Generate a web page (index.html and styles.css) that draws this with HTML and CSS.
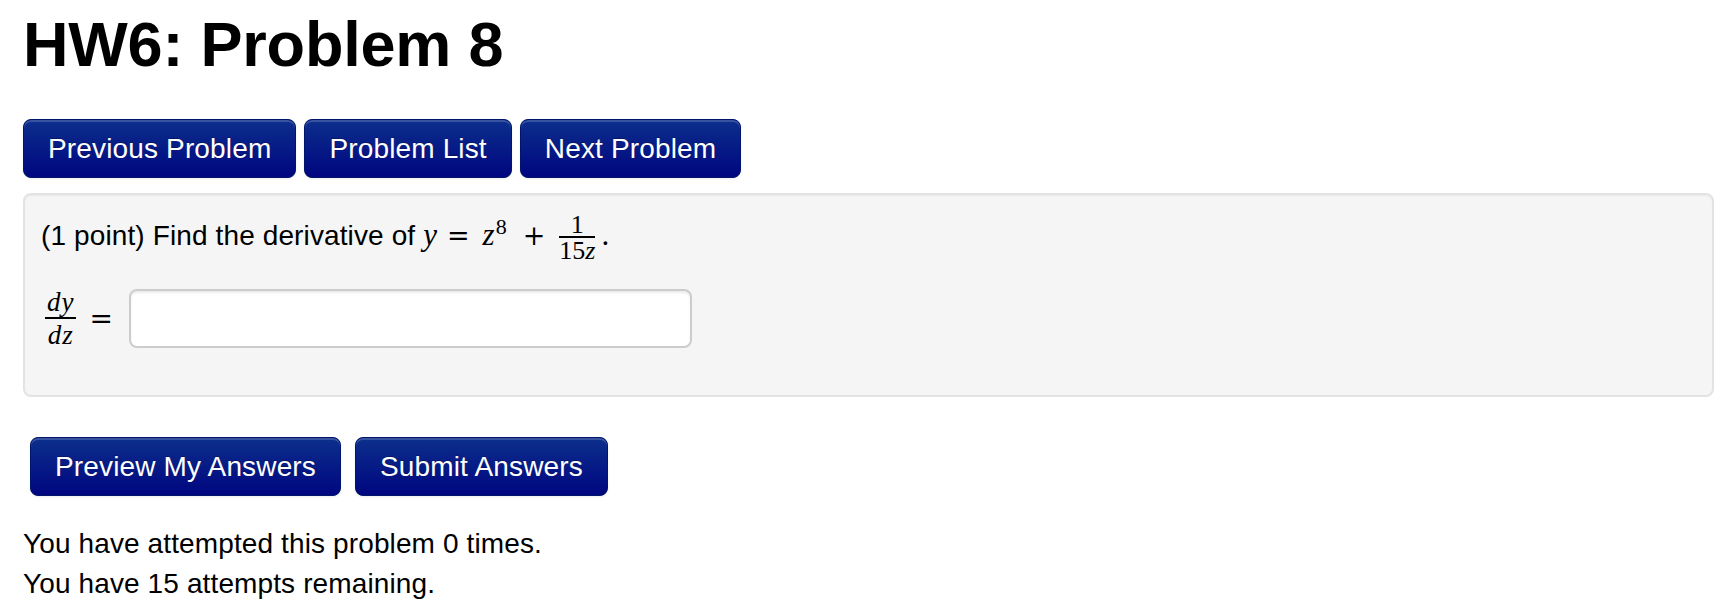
FILE: index.html
```html
<!DOCTYPE html>
<html lang="en">
<head>
<meta charset="utf-8">
<title>HW6: Problem 8</title>
<link rel="stylesheet" href="styles.css">
</head>
<body>
<div class="page">
  <h1 class="title">HW6: Problem 8</h1>

  <div class="nav-buttons">
    <a class="btn">Previous Problem</a>
    <a class="btn">Problem List</a>
    <a class="btn">Next Problem</a>
  </div>

  <div class="well">
    <p class="statement">(1 point) Find the derivative of <span class="math"><span class="mi">y</span><span class="mo eq-inline">=</span><span class="mi">z</span><span class="msup">8</span><span class="mo plus">+</span><span class="frac frac-inline"><span class="num"><span class="mn">1</span></span><span class="den"><span class="mn">15</span><span class="mi">z</span></span></span><span class="mo dot">.</span></span></p>

    <div class="answer-row">
      <span class="frac frac-dydz"><span class="num">dy</span><span class="den">dz</span></span>
      <span class="eq">=</span>
      <input class="answer" type="text">
    </div>
  </div>

  <div class="submit-row">
    <button class="btn" type="button">Preview My Answers</button>
    <button class="btn" type="button">Submit Answers</button>
  </div>

  <div class="attempts">
    <p>You have attempted this problem 0 times.</p>
    <p>You have 15 attempts remaining.</p>
  </div>
</div>
</body>
</html>
```

FILE: styles.css
```css
html, body {
  margin: 0;
  padding: 0;
  background: #ffffff;
}

body {
  font-family: "Liberation Sans", Arial, Helvetica, sans-serif;
  font-size: 28px;
  line-height: 40px;
  color: #000000;
  letter-spacing: 0.12px;
}

.page {
  padding: 0 16px 0 23px;
}

.title {
  margin: 4px 0 35px;
  font-size: 63px;
  line-height: 80px;
  font-weight: bold;
  letter-spacing: -0.2px;
}

.nav-buttons {
  display: flex;
  gap: 8px;
  margin-bottom: 15px;
}

.btn {
  display: inline-block;
  box-sizing: border-box;
  padding: 8.5px 24px;
  font-family: "Liberation Sans", Arial, Helvetica, sans-serif;
  font-size: 28px;
  line-height: 40px;
  letter-spacing: 0.15px;
  color: #ffffff;
  text-shadow: 0 -1px 0 rgba(0, 0, 0, 0.25);
  background-color: #000a80;
  background-image: linear-gradient(to bottom, #0c2f8c, #000680);
  border: 1px solid #00166a;
  border-radius: 8px;
  box-shadow: inset 0 2px 0 rgba(255, 255, 255, 0.18), 0 1px 2px rgba(0, 0, 0, 0.08);
  cursor: pointer;
  text-decoration: none;
  white-space: nowrap;
}

.well {
  box-sizing: border-box;
  padding: 19px 16px;
  margin-bottom: 40px;
  background: #f5f5f5;
  border: 2px solid #e3e3e3;
  border-radius: 8px;
  box-shadow: inset 0 1px 1px rgba(0, 0, 0, 0.05);
}

.statement {
  margin: 0 0 35px;
  height: 40px;
  line-height: 40px;
  white-space: nowrap;
}

.math {
  font-family: "Liberation Serif", "Times New Roman", serif;
  font-size: 31px;
  letter-spacing: 0;
}

.mi {
  font-style: italic;
}

.mo {
  font-family: "DejaVu Serif", "Liberation Serif", serif;
  font-size: 27px;
}

.eq-inline {
  margin: 0 13px 0 10px;
}

.msup {
  font-size: 22px;
  vertical-align: 11px;
  line-height: 0;
  margin-left: 1px;
}

.plus {
  margin: 0 14px 0 16px;
}

.dot {
  font-family: "Liberation Serif", serif;
  font-size: 31px;
  margin-left: 6px;
}

.frac {
  display: inline-flex;
  flex-direction: column;
  align-items: stretch;
  text-align: center;
  line-height: 1;
  font-family: "Liberation Serif", "Times New Roman", serif;
}

.frac .num {
  border-bottom: 2px solid #000000;
}

.frac-inline {
  font-size: 26px;
  vertical-align: middle;
  line-height: 21px;
}

.frac-inline .num {
  padding: 0 3px 1px;
}

.frac-inline .den {
  padding-top: 2px;
}

.frac-dydz {
  font-size: 27px;
  font-style: italic;
  margin-left: 4px;
}

.frac-dydz .num {
  padding: 0 2px 1px;
  letter-spacing: 1px;
}

.frac-dydz .den {
  padding-top: 3px;
  letter-spacing: 1px;
}

.answer-row {
  display: flex;
  align-items: center;
  height: 59px;
  margin-bottom: 28px;
}

.eq {
  font-family: "DejaVu Serif", "Liberation Serif", serif;
  font-size: 28px;
  line-height: 1;
  margin-left: 13px;
}

.answer {
  box-sizing: border-box;
  width: 563px;
  height: 59px;
  margin-left: 16px;
  padding: 8px 12px;
  font-family: "Liberation Sans", Arial, sans-serif;
  font-size: 28px;
  background: #ffffff;
  border: 2px solid #cccccc;
  border-radius: 8px;
  box-shadow: inset 0 2px 2px rgba(0, 0, 0, 0.075);
  outline: none;
}

.submit-row {
  display: flex;
  gap: 14px;
  margin-left: 7px;
  margin-bottom: 28px;
}

.attempts p {
  margin: 0;
  line-height: 40px;
}
```
